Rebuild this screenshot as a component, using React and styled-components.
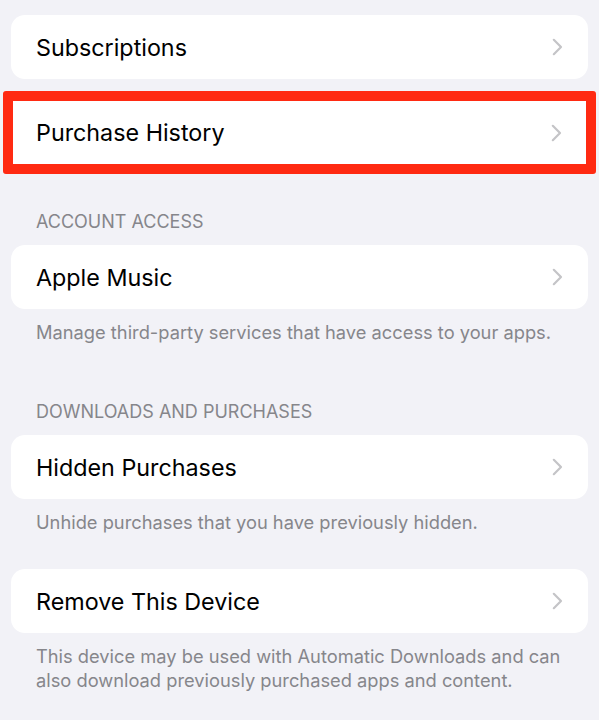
import React from "react";
import styled, { createGlobalStyle } from "styled-components";

const GlobalStyle = createGlobalStyle`
  html, body {
    margin: 0;
    padding: 0;
    background: #f2f2f7;
  }
  body {
    font-family: Inter, "Noto Sans", "Liberation Sans", sans-serif;
    -webkit-font-smoothing: antialiased;
  }
`;

const Page = styled.div`
  width: 599px;
  height: 720px;
  overflow: hidden;
  box-sizing: border-box;
  padding: 15px 11px 0;
  background: #f2f2f7;
`;

const Card = styled.div`
  height: 64px;
  display: flex;
  align-items: center;
  justify-content: space-between;
  box-sizing: border-box;
  padding: 0 25px;
  background: #fff;
  border-radius: 14px;
  margin-top: ${(p) => p.$top || 0}px;
`;

const Highlight = styled.div`
  height: 83px;
  margin: 12px -8px 0;
  box-sizing: border-box;
  border: 10px solid #ff2a12;
  border-radius: 3px;
  background: #fff;
  display: flex;
  align-items: center;
  justify-content: space-between;
  padding: 0 24px 0 23px;
`;

const Label = styled.span`
  font-size: 23.3px;
  color: #000;
`;

const Header = styled.div`
  font-size: 18px;
  line-height: 20px;
  color: #86868b;
  padding-left: 25px;
  margin-top: ${(p) => p.$top}px;
  margin-bottom: 13px;
`;

const Footer = styled.div`
  font-size: 18.3px;
  line-height: 24px;
  color: #86868b;
  padding: 0 25px;
  margin-top: 11px;
`;

function Chevron() {
  return (
    <svg width="11" height="18" viewBox="0 0 11 18" fill="none">
      <polyline
        points="1.8,1.8 9,9 1.8,16.2"
        stroke="#c4c4c7"
        strokeWidth="2.2"
        strokeLinecap="round"
        strokeLinejoin="round"
      />
    </svg>
  );
}

function Row({ label, top }) {
  return (
    <Card $top={top}>
      <Label>{label}</Label>
      <Chevron />
    </Card>
  );
}

export default function App() {
  return (
    <>
      <GlobalStyle />
      <Page>
        <Row label="Subscriptions" />
        <Highlight>
          <Label>Purchase History</Label>
          <Chevron />
        </Highlight>

        <Header $top={38}>ACCOUNT ACCESS</Header>
        <Row label="Apple Music" />
        <Footer>Manage third-party services that have access to your apps.</Footer>

        <Header $top={58}>DOWNLOADS AND PURCHASES</Header>
        <Row label="Hidden Purchases" />
        <Footer>Unhide purchases that you have previously hidden.</Footer>

        <Row label="Remove This Device" top={35} />
        <Footer>
          This device may be used with Automatic Downloads and can also
          download previously purchased apps and content.
        </Footer>
      </Page>
    </>
  );
}
